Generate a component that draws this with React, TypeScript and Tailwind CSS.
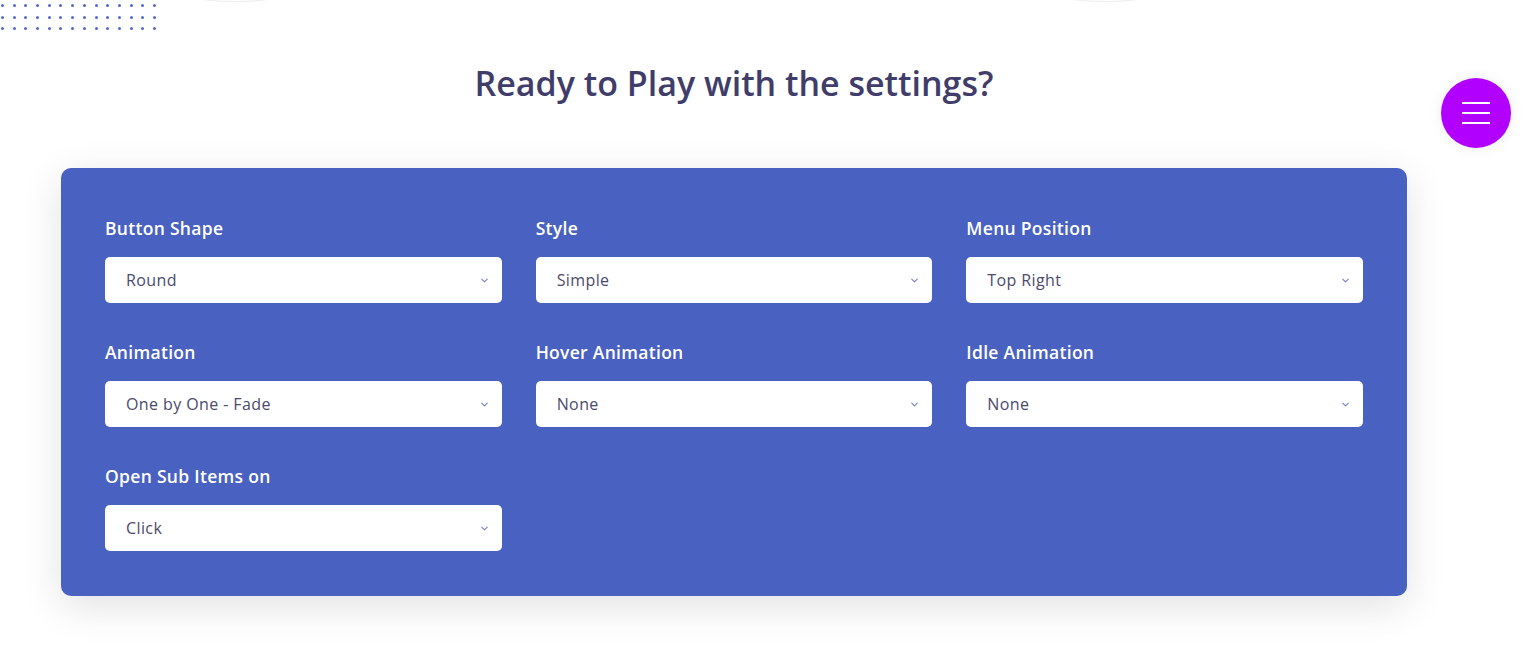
import { ChevronDown } from "lucide-react";

type Field = { label: string; value: string };

const fields: Field[] = [
  { label: "Button Shape", value: "Round" },
  { label: "Style", value: "Simple" },
  { label: "Menu Position", value: "Top Right" },
  { label: "Animation", value: "One by One - Fade" },
  { label: "Hover Animation", value: "None" },
  { label: "Idle Animation", value: "None" },
  { label: "Open Sub Items on", value: "Click" },
];

function Dots() {
  const cols = Array.from({ length: 14 });
  return (
    <div className="absolute left-[1px] top-[4px] flex flex-col gap-[8.5px]">
      {[0, 1, 2].map((r) => (
        <div key={r} className="flex gap-[8.7px]">
          {cols.map((_, c) => (
            <span key={c} className="block h-[3px] w-[3px] rounded-full bg-[#5568cc]" />
          ))}
        </div>
      ))}
    </div>
  );
}

function SelectBox({ label, value }: Field) {
  return (
    <div className="flex flex-col">
      <div className="text-[17.5px] font-semibold leading-6 tracking-[0.3px] text-white">{label}</div>
      <div className="mt-[17px] flex h-[46px] items-center justify-between rounded-[5px] bg-white pl-[21px] pr-[12px]">
        <span className="text-[16px] tracking-[0.4px] text-[#4b4a6d]">{value}</span>
        <ChevronDown className="h-[11px] w-[11px] text-[#7481c9]" strokeWidth={2.5} />
      </div>
    </div>
  );
}

export default function App() {
  return (
    <div
      className="relative h-[659px] w-full overflow-hidden bg-white"
      style={{ fontFamily: '"Open Sans", "Liberation Sans", sans-serif' }}
    >
      <Dots />

      {/* faint arcs from the hero above */}
      <div className="absolute left-[160px] top-[-40px] h-[42px] w-[150px] rounded-b-[50%] border-b border-[#eeeeee]" />
      <div className="absolute left-[1030px] top-[-40px] h-[42px] w-[150px] rounded-b-[50%] border-b border-[#eeeeee]" />

      <button className="absolute left-[1441px] top-[78px] flex h-[70px] w-[70px] flex-col items-center justify-center gap-[8px] rounded-full bg-[#b200ff] shadow-[0_0_14px_rgba(0,0,0,0.08)]">
        <span className="block h-[2px] w-[28px] bg-white" />
        <span className="block h-[2px] w-[28px] bg-white" />
        <span className="block h-[2px] w-[28px] bg-white" />
      </button>

      <div className="w-[1407px] pl-[61px]">
        <h2 className="pt-[63px] text-center text-[34px] font-semibold leading-10 text-[#403d6a]">
          Ready to Play with the settings?
        </h2>

        <section className="mt-[65px] w-[1346px] rounded-[10px] bg-[#4961c1] px-[44px] pb-[45px] pt-[48px] shadow-[0_10px_40px_rgba(0,0,0,0.12)]">
          <div className="grid grid-cols-3 gap-x-[34px] gap-y-[37px]">
            {fields.map((f) => (
              <SelectBox key={f.label} {...f} />
            ))}
          </div>
        </section>
      </div>
    </div>
  );
}
